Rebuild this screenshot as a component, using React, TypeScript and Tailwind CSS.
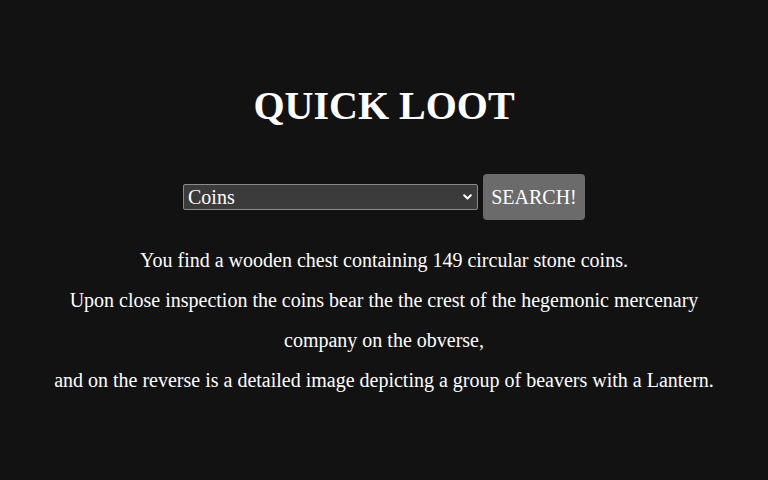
import React from "react";

export default function App() {
  return (
    <div
      className="min-h-[480px] w-full bg-[#121212] text-white flex flex-col items-center px-8"
      style={{ fontFamily: '"Liberation Serif", "Times New Roman", serif' }}
    >
      <h1 className="mt-[83px] text-[40px] leading-[46px] font-bold tracking-normal">QUICK LOOT</h1>

      <div className="mt-[45px] flex items-center gap-[5px]">
        <div className="relative w-[295px] h-[26px]">
          <select
            defaultValue="Coins"
            className="appearance-none w-full h-full bg-[#3b3b3b] border border-[#8a8a8a] rounded-[2px] text-white text-[20px] leading-[24px] pl-[4px] pr-6 outline-none"
            style={{ fontFamily: '"Liberation Serif", "Times New Roman", serif' }}
          >
            <option>Coins</option>
            <option>Gems</option>
            <option>Weapons</option>
            <option>Armor</option>
          </select>
          <svg
            className="pointer-events-none absolute right-[6px] top-[10px]"
            width="9"
            height="6"
            viewBox="0 0 9 6"
          >
            <path d="M1.2 1.2 L4.5 4.5 L7.8 1.2" fill="none" stroke="#ffffff" strokeWidth="2" strokeLinecap="round" strokeLinejoin="round" />
          </svg>
        </div>
        <button
          className="h-[46px] w-[102px] bg-[#6b6b6b] rounded-[4px] text-[20px] text-white"
          style={{ fontFamily: '"Liberation Serif", "Times New Roman", serif' }}
        >
          SEARCH!
        </button>
      </div>

      <div className="mt-[20px] text-[20px] leading-[40px] text-center text-white">
        <p>You find a wooden chest containing 149 circular stone coins.</p>
        <p>Upon close inspection the coins bear the the crest of the hegemonic mercenary company on the obverse,</p>
        <p>and on the reverse is a detailed image depicting a group of beavers with a Lantern.</p>
      </div>
    </div>
  );
}
